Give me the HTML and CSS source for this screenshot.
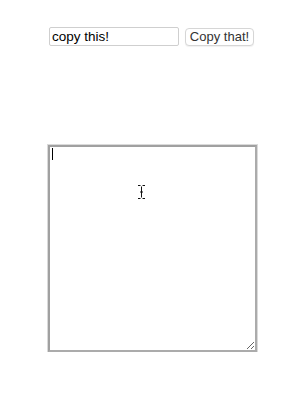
FILE: index.html
```html
<!DOCTYPE html>
<html lang="en">
<head>
  <meta charset="UTF-8">
  <title>Copy that</title>
  <link rel="stylesheet" href="styles.css">
</head>
<body>
  <div id="root">
    <div class="copy-row">
      <input class="copy-input" type="text" value="copy this!">
      <button class="copy-button">Copy that!</button>
    </div>

    <div class="paste-area">
      <textarea class="paste-box"></textarea>
      <span class="caret"></span>
      <svg class="ibeam" width="9" height="16" viewBox="0 0 9 16">
        <path d="M1 1.5h2.5M5.5 1.5H8M4.5 2.5v11M1 14.5h2.5M5.5 14.5H8M3 8h3" stroke="#fff" stroke-width="3" fill="none"/>
        <path d="M1 1.5h2.5M5.5 1.5H8M4.5 2.5v11M1 14.5h2.5M5.5 14.5H8M3 8h3" stroke="#111" stroke-width="1" fill="none"/>
      </svg>
    </div>
  </div>
</body>
</html>
```

FILE: styles.css
```css
html,
body {
  margin: 0;
  padding: 0;
  background: #fff
}

body,
input,
button,
textarea {
  font-family: "Liberation Sans", Helvetica, Arial, sans-serif;
  font-size: 13px
}

#root {
  display: flex;
  flex-direction: column;
  align-items: center;
  padding-left: 11px
}

.copy-row {
  display: flex;
  align-items: center;
  gap: 6px;
  margin-top: 27px
}

.copy-input {
  width: 130px;
  height: 19px;
  box-sizing: border-box;
  margin: 0;
  padding: 0 2px;
  border: 1px solid #cfcfcf;
  border-radius: 2px;
  color: #000;
  font-size: 13.5px
}

.copy-button {
  width: 69px;
  height: 18px;
  box-sizing: border-box;
  margin: 0;
  padding: 0;
  border: 1px solid #d6d6d6;
  border-radius: 4px;
  background: #fff;
  color: #333;
  box-shadow: 0 1px 1px rgba(0, 0, 0, 0.06)
}

.paste-area {
  position: relative;
  margin-top: 99px;
  margin-left: 2px
}

.paste-box {
  display: block;
  width: 209px;
  height: 207px;
  box-sizing: border-box;
  margin: 0;
  padding: 2px;
  border: 2px solid #ababab;
  border-top-color: #a0a0a0;
  border-left-color: #a0a0a0;
  outline: 1px solid #dadada;
  outline-offset: 0;
  background: #fff
}

.caret {
  position: absolute;
  left: 4px;
  top: 3px;
  width: 1px;
  height: 12px;
  background: #000
}

.ibeam {
  position: absolute;
  left: 89px;
  top: 39px
}
```
